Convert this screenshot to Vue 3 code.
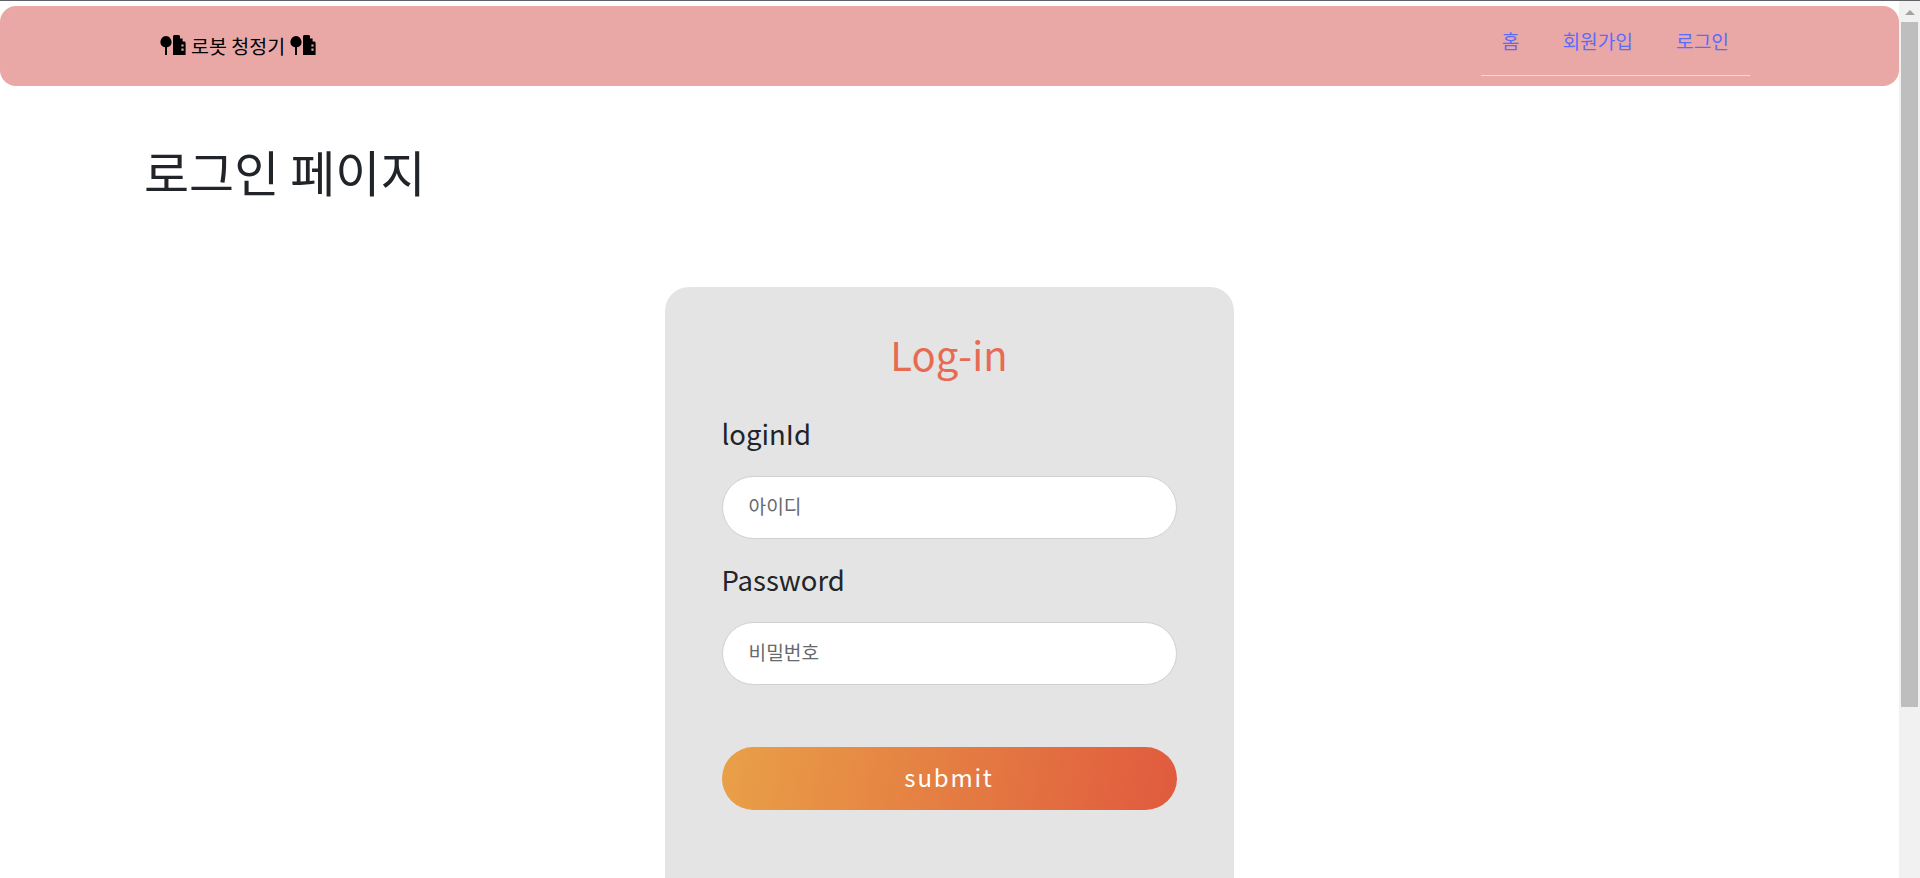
<script setup>
const links = ['홈', '회원가입', '로그인']
const fields = [
  { label: 'loginId', placeholder: '아이디', type: 'text' },
  { label: 'Password', placeholder: '비밀번호', type: 'password' }
]
</script>

<template>
  <div class="shell">
    <div class="page">
      <header class="navbar">
        <a class="brand">
          <svg class="glyph" viewBox="0 0 26 20" aria-hidden="true">
            <path d="M6 1C3 1 .4 4 .4 7.2.4 10 2.6 12 5 12.3V20H7V12.3C9.4 12 11.6 10 11.6 7.2 11.6 4 9 1 6 1Z"/>
            <path fill-rule="evenodd" d="M13 20V1.6C13 .7 13.7 0 14.6 0H18.4C19.3 0 20 .7 20 1.6V3.4H22.6V6.4H24C25 6.4 25.6 7 25.6 8V20ZM21.4 9.4V11.6H23.6V9.4ZM21.4 13.6V15.8H23.6V13.6Z"/>
          </svg>
          <span>로봇 청정기</span>
          <svg class="glyph" viewBox="0 0 26 20" aria-hidden="true">
            <path d="M6 1C3 1 .4 4 .4 7.2.4 10 2.6 12 5 12.3V20H7V12.3C9.4 12 11.6 10 11.6 7.2 11.6 4 9 1 6 1Z"/>
            <path fill-rule="evenodd" d="M13 20V1.6C13 .7 13.7 0 14.6 0H18.4C19.3 0 20 .7 20 1.6V3.4H22.6V6.4H24C25 6.4 25.6 7 25.6 8V20ZM21.4 9.4V11.6H23.6V9.4ZM21.4 13.6V15.8H23.6V13.6Z"/>
          </svg>
        </a>
        <ul class="links">
          <li v-for="link in links" :key="link"><a>{{ link }}</a></li>
        </ul>
      </header>

      <main class="content">
        <h1 class="title">로그인 페이지</h1>
        <form class="card" @submit.prevent>
          <h2 class="card-title">Log-in</h2>
          <div v-for="field in fields" :key="field.label" class="field">
            <label>{{ field.label }}</label>
            <input :type="field.type" :placeholder="field.placeholder" />
          </div>
          <button type="submit" class="submit">submit</button>
        </form>
      </main>
    </div>

    <div class="scrollbar" aria-hidden="true">
      <div class="arrow"></div>
      <div class="thumb"></div>
    </div>
  </div>
</template>

<style scoped>
.shell {
  display: flex;
  height: 878px;
  overflow: hidden;
  background: #fff;
  border-top: 1px solid #5f6368;
  box-sizing: border-box;
  font-family: "Noto Sans CJK KR", "Noto Sans", sans-serif;
}
.page {
  flex: 1;
  min-width: 0;
  padding-top: 5px;
}
.navbar {
  display: flex;
  justify-content: space-between;
  height: 80px;
  box-sizing: border-box;
  padding-left: 160px;
  padding-right: 149px;
  background: #e9a8a6;
  border-radius: 16px;
}
.brand {
  display: flex;
  align-items: center;
  gap: 5px;
  height: 78px;
  color: #000;
  font-size: 19.5px;
}
.glyph {
  width: 26px;
  height: 20px;
  fill: #000;
}
.links {
  display: flex;
  height: 70px;
  box-sizing: border-box;
  margin: 0;
  padding: 0 21px;
  gap: 43px;
  list-style: none;
  border-bottom: 1px solid rgba(255, 255, 255, 0.55);
}
.links a {
  display: block;
  padding-top: 21px;
  color: #5a6cfa;
  font-size: 19.2px;
  line-height: 28px;
}
.content {
  padding: 0 145px 0 144px;
}
.title {
  margin: 49px 0 0;
  height: 105px;
  color: #212529;
  font-size: 49px;
  font-weight: 400;
  line-height: 72px;
}
.card {
  width: 569px;
  margin: 47px auto 0;
  padding: 37px 57px 110px;
  box-sizing: border-box;
  background: #e4e4e4;
  border-radius: 24px;
}
.card-title {
  margin: 0 0 29px;
  color: #e66b52;
  font-size: 40px;
  font-weight: 400;
  line-height: 60px;
  text-align: center;
}
.field {
  display: flex;
  flex-direction: column;
  margin-bottom: 20px;
}
.field label {
  margin-bottom: 23px;
  color: #212529;
  font-size: 27.5px;
  line-height: 40px;
}
.field input {
  height: 63px;
  padding: 0 26px 3px;
  box-sizing: border-box;
  background: #fff;
  border: 1px solid #d0d0d0;
  border-radius: 32px;
  font-family: inherit;
  font-size: 19.2px;
  outline: none;
}
.field input::placeholder {
  color: #666a6e;
  opacity: 1;
}
.submit {
  display: block;
  width: 100%;
  height: 63px;
  margin-top: 62px;
  padding: 0 0 5px;
  background: linear-gradient(100deg, #e9a047, #e05a3e);
  border: 0;
  border-radius: 32px;
  color: #fff;
  font-family: inherit;
  font-size: 24px;
  letter-spacing: 1.8px;
}
.scrollbar {
  flex: 0 0 21px;
  display: flex;
  flex-direction: column;
  align-items: center;
  background: #f1f1f1;
  margin-top: -1px;
}
.arrow {
  margin-top: 10px;
  width: 0;
  height: 0;
  border-left: 5px solid transparent;
  border-right: 5px solid transparent;
  border-bottom: 5px solid #a3a3a3;
}
.thumb {
  width: 17px;
  height: 685px;
  margin-top: 7px;
  background: #bebebe;
}
</style>
